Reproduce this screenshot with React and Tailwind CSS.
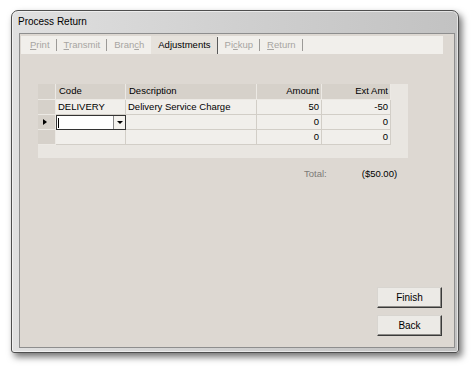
import React from 'react';

const font = { fontFamily: '"Liberation Sans", Arial, sans-serif' };

const tabs = [
  { pre: '', u: 'P', post: 'rint' },
  { pre: '', u: 'T', post: 'ransmit' },
  { pre: 'Bran', u: 'c', post: 'h' },
  { pre: 'Ad', u: 'j', post: 'ustments', active: true },
  { pre: 'Pi', u: 'c', post: 'kup' },
  { pre: '', u: 'R', post: 'eturn' },
];

const TabStrip = () => (
  <div className="mt-[2px] ml-[1px] w-[422px] h-[18px] bg-[#f1efeb] flex items-stretch pl-[2px] text-[9.5px]">
    {tabs.map((t, i) => (
      <React.Fragment key={i}>
        <div
          className={
            'flex items-center pl-[7px] pr-[6px] ' +
            (t.active ? 'bg-[#e6e2dc] text-black' : 'text-[#a7a5a2]')
          }
        >
          <span>
            {t.pre}
            <span className="underline underline-offset-1">{t.u}</span>
            {t.post}
          </span>
        </div>
        <div className="flex items-center">
          <div
            className={
              'w-px ' +
              (t.active
                ? 'h-[17px] bg-[#5a5a5a]'
                : tabs[i + 1] && tabs[i + 1].active
                ? 'h-[12px] bg-transparent'
                : 'h-[12px] bg-[#9c9a97]')
            }
          />
        </div>
      </React.Fragment>
    ))}
  </div>
);

const cols = [
  { label: 'Code', w: 'w-[70px]', right: false },
  { label: 'Description', w: 'w-[131px]', right: false },
  { label: 'Amount', w: 'w-[65px]', right: true },
  { label: 'Ext Amt', w: 'w-[69px]', right: true },
];

const rows = [
  ['DELIVERY', 'Delivery Service Charge', '50', '-50'],
  ['', '', '0', '0'],
  ['', '', '0', '0'],
];

const Grid = () => (
  <div className="mt-[30px] ml-[18px] w-[370px] h-[74px] bg-[#e9e6e1] text-[9.5px] text-black">
    <div className="flex h-[16px]">
      <div className="w-[18px] bg-[#d6d1ca] border-r border-b border-[#ece9e4]" />
      {cols.map((c) => (
        <div
          key={c.label}
          className={
            c.w +
            ' bg-[#d6d1ca] border-r border-b border-[#ece9e4] flex items-center ' +
            (c.right ? 'justify-end pr-[2px]' : 'pl-[3px]')
          }
        >
          {c.label}
        </div>
      ))}
    </div>
    {rows.map((r, ri) => (
      <div key={ri} className="flex h-[15px]">
        <div className="w-[18px] bg-[#d6d1ca] border-r border-b border-[#ece9e4] flex items-center pl-[5px]">
          {ri === 1 && (
            <div className="w-0 h-0 border-y-[3.5px] border-y-transparent border-l-[4px] border-l-black" />
          )}
        </div>
        {r.map((v, ci) => {
          const c = cols[ci];
          if (ri === 1 && ci === 0) {
            return (
              <div key={ci} className={c.w + ' bg-white border border-[#333] flex items-stretch'}>
                <div className="flex-1 flex items-center pl-[1px]">
                  <div className="w-px h-[10px] bg-black" />
                </div>
                <div className="w-[12px] border-l border-[#888] bg-[#f4f2ee] flex items-center justify-center">
                  <div className="w-0 h-0 border-x-[3px] border-x-transparent border-t-[3px] border-t-black" />
                </div>
              </div>
            );
          }
          return (
            <div
              key={ci}
              className={
                c.w +
                ' bg-[#f1efeb] border-r border-b border-[#d2cec7] flex items-center ' +
                (c.right ? 'justify-end pr-[2px]' : 'pl-[2px]')
              }
            >
              {v}
            </div>
          );
        })}
      </div>
    ))}
  </div>
);

const Button = ({ children }) => (
  <button className="w-[65px] h-[21px] bg-[#eceae6] border border-t-[#d8d5d0] border-l-[#d8d5d0] border-r-[#3a3a3a] border-b-[#3a3a3a] shadow-[inset_-1px_-1px_0_#8c8a86] text-[10px] text-black flex items-center justify-center">
    {children}
  </button>
);

export default function App() {
  return (
    <div className="w-[474px] h-[366px] bg-white overflow-hidden" style={font}>
      <div className="ml-[11px] mt-[10px] w-[448px] h-[343px] rounded-t-[7px] rounded-b-[3px] border border-[#4e4e4e] bg-gradient-to-r from-[#e0e0e0] via-[#d0d0d0] to-[#c2c2c2] shadow-[3px_4px_7px_rgba(0,0,0,0.55),inset_0_0_0_1px_rgba(255,255,255,0.55)] flex flex-col">
        <div className="h-[22px] pl-[6px] pt-[6px] text-[10px] text-black leading-none">Process Return</div>
        <div className="flex-1 ml-[7px] mr-[3px] mb-[4px] bg-[#ddd8d2] border border-[#8e8e8e] flex flex-col">
          <TabStrip />
          <Grid />
          <div className="flex items-center mt-[9px] pl-[284px] text-[9.5px]">
            <span className="text-[#7c7a77]">Total:</span>
            <span className="ml-[35px] text-black">($50.00)</span>
          </div>
          <div className="mt-auto mb-[11px] mr-[12px] flex flex-col items-end gap-[7px]">
            <Button>Finish</Button>
            <Button>Back</Button>
          </div>
        </div>
      </div>
    </div>
  );
}
